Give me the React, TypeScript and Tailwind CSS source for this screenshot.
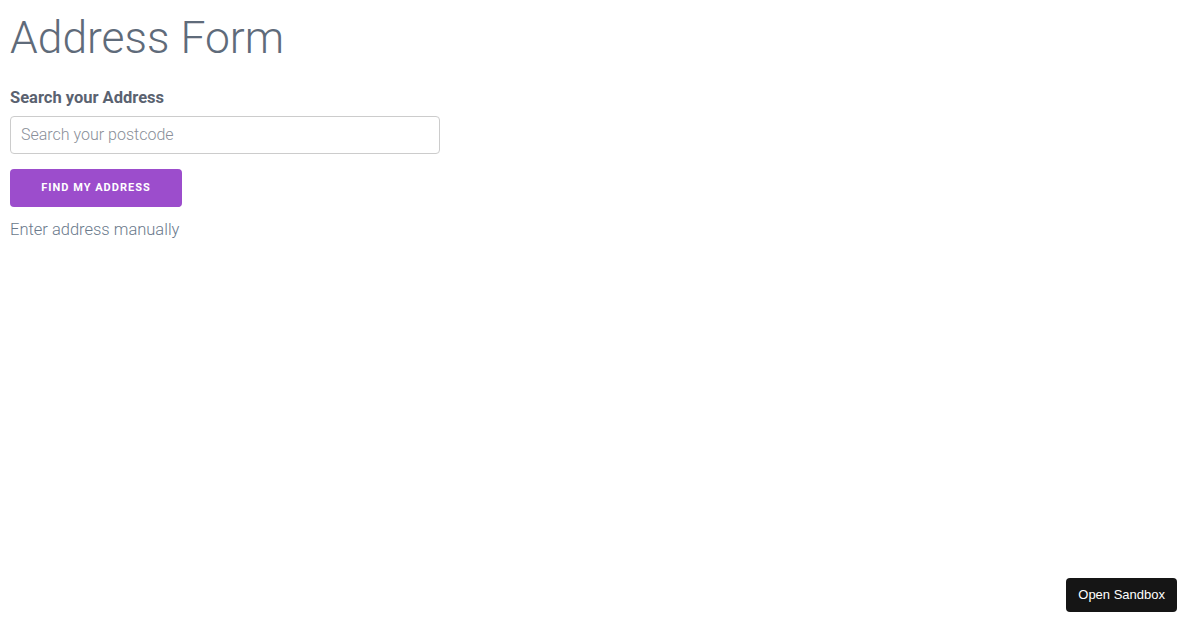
export default function App() {
  return (
    <div className="relative min-h-[630px] bg-white font-['Roboto',sans-serif]">
      <div className="px-[10px] pt-[8px]">
        <h1 className="text-[44.4px] font-light leading-[60px] text-[#5f6b7a]">Address Form</h1>
        <form className="mt-[20px] w-[430px]" onSubmit={(e) => e.preventDefault()}>
          <label className="block text-[16.5px] font-bold leading-[20px] text-[#5a6270]">
            Search your Address
          </label>
          <input
            type="text"
            placeholder="Search your postcode"
            className="mt-[8px] block h-[38px] w-full rounded-[4px] border border-[#cccccc] px-[10px] pb-[1px] text-[16px] font-light text-[#4a5360] placeholder:text-[#8a8f99] outline-none"
          />
          <button
            type="submit"
            className="mt-[15px] block h-[38px] w-[172px] rounded-[4px] bg-[#9c4dcc] text-[11px] font-bold tracking-[1px] text-white uppercase"
          >
            Find my address
          </button>
          <p className="mt-[13px] text-[16.5px] font-light leading-[20px] text-[#6b7a8c]">Enter address manually</p>
        </form>
      </div>
      <button className="absolute right-[23px] bottom-[18px] h-[34px] rounded-[4px] bg-[#151515] px-[12px] font-['Liberation_Sans',sans-serif] text-[13px] text-white">
        Open Sandbox
      </button>
    </div>
  );
}
